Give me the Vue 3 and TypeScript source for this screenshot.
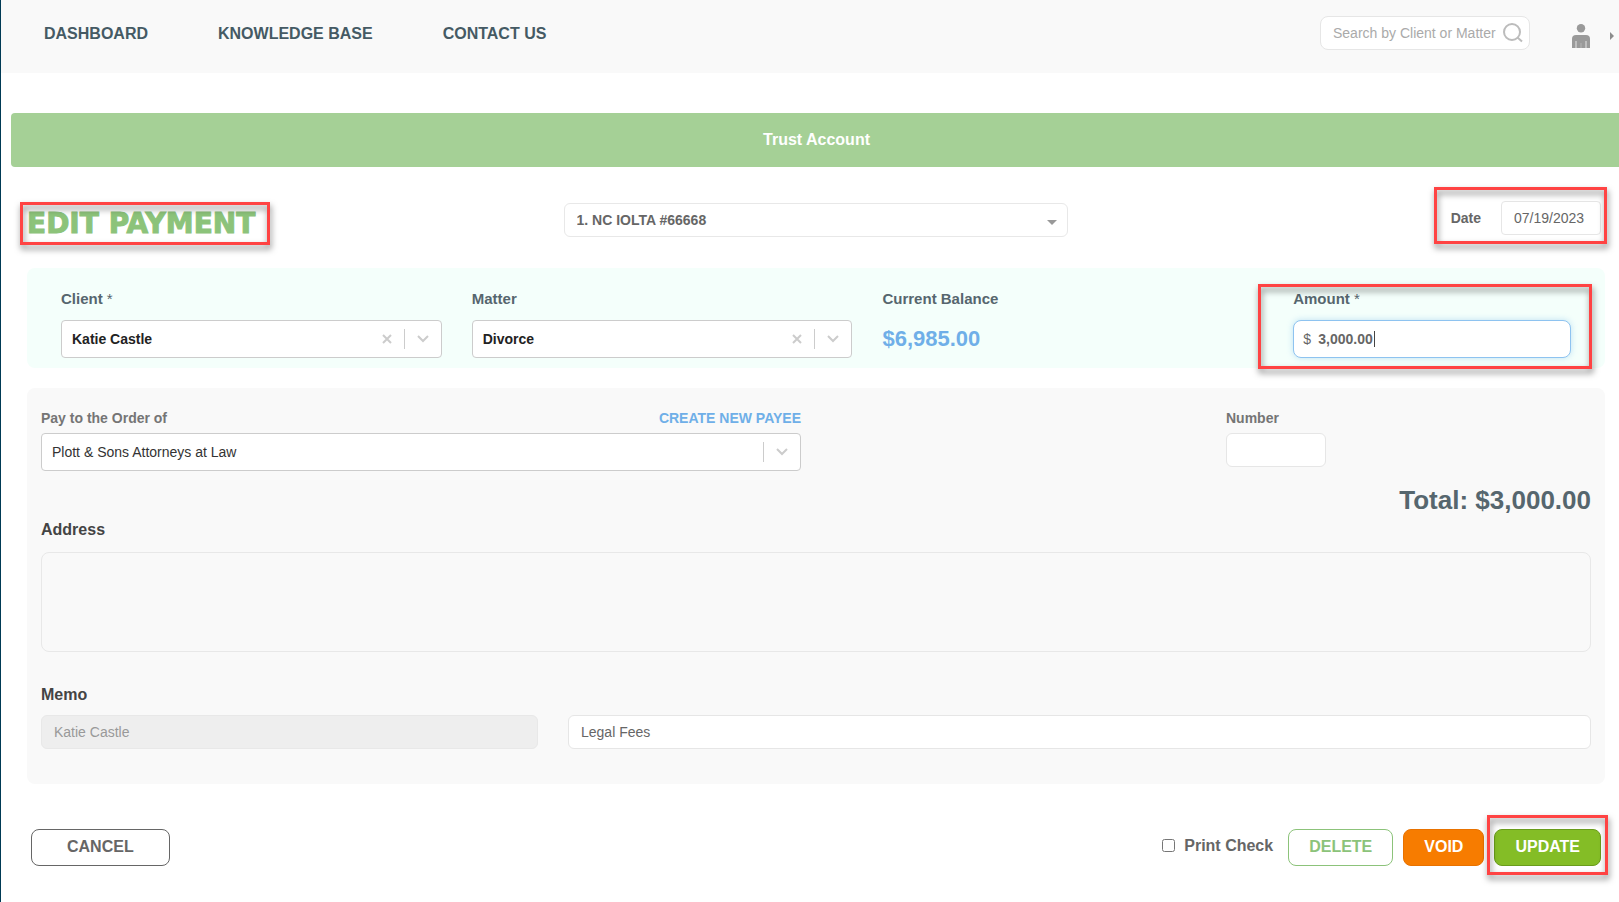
<script setup lang="ts">
import { computed, ref } from 'vue'

interface NavLink {
  label: string
  href: string
}

const navLinks: NavLink[] = [
  { label: 'DASHBOARD', href: '#dashboard' },
  { label: 'KNOWLEDGE BASE', href: '#knowledge-base' },
  { label: 'CONTACT US', href: '#contact' },
]

const search = ref('')
const account = ref('1. NC IOLTA #66668')
const date = ref('07/19/2023')
const client = ref('Katie Castle')
const matter = ref('Divorce')
const amount = ref('3,000.00')
const payee = ref('Plott & Sons Attorneys at Law')
const checkNumber = ref('')
const address = ref('')
const memoClient = ref('Katie Castle')
const memo = ref('Legal Fees')
const printCheck = ref(false)

const total = computed(() => `$${amount.value}`)
</script>

<template>
  <div class="page">
    <header class="topbar">
      <nav class="nav">
        <a v-for="link in navLinks" :key="link.label" :href="link.href">{{ link.label }}</a>
      </nav>
      <div class="tools">
        <div class="search">
          <input v-model="search" type="text" placeholder="Search by Client or Matter" aria-label="Search by Client or Matter" />
          <svg class="search-icon" viewBox="0 0 20 20" width="20" height="20" aria-hidden="true">
            <circle cx="9" cy="9" r="8" />
            <path d="M14.5 14.5 L19 18.5" />
          </svg>
        </div>
        <button class="user" type="button" aria-label="User menu">
          <svg viewBox="0 0 18 24" width="18" height="24" aria-hidden="true">
            <circle cx="9" cy="4.2" r="4.2" fill="#9a9a9a" />
            <path d="M0 24V15Q0 11 4 11H14Q18 11 18 15V24Z" fill="#9a9a9a" />
            <path d="M4 17V24M14 17V24" stroke="#e4e4e4" stroke-width="1" />
            <path d="M9 19V24" stroke="#b4b4b4" stroke-width="1" />
          </svg>
          <svg viewBox="0 0 4 8" width="4" height="8" aria-hidden="true">
            <path d="M0 0L4 4L0 8Z" fill="#8c8c8c" />
          </svg>
        </button>
      </div>
    </header>

    <div class="banner">Trust Account</div>

    <main class="content">
      <div class="title-row">
        <h1 class="title marked">EDIT PAYMENT</h1>
        <div class="account">
          <select v-model="account" aria-label="Account">
            <option>1. NC IOLTA #66668</option>
          </select>
          <svg class="account-caret" viewBox="0 0 10 5" width="10" height="5" aria-hidden="true">
            <path d="M0 0H10L5 5Z" fill="#999" />
          </svg>
        </div>
        <div class="date marked">
          <label for="date">Date</label>
          <input id="date" v-model="date" class="box" type="text" />
        </div>
      </div>

      <section class="summary">
        <div class="field">
          <label for="client">Client <span class="required">*</span></label>
          <div class="combo">
            <select id="client" v-model="client" class="strong">
              <option>Katie Castle</option>
            </select>
            <div class="indicators">
              <button class="clear" type="button" aria-label="Clear client" @click="client = ''">
                <svg viewBox="0 0 10 10" width="10" height="10"><path d="M1 1L9 9M9 1L1 9" /></svg>
              </button>
              <span class="divider"></span>
              <svg class="chevron" viewBox="0 0 12 8" width="12" height="8"><path d="M1 1L6 6L11 1" /></svg>
            </div>
          </div>
        </div>
        <div class="field">
          <label for="matter">Matter</label>
          <div class="combo">
            <select id="matter" v-model="matter" class="strong">
              <option>Divorce</option>
            </select>
            <div class="indicators">
              <button class="clear" type="button" aria-label="Clear matter" @click="matter = ''">
                <svg viewBox="0 0 10 10" width="10" height="10"><path d="M1 1L9 9M9 1L1 9" /></svg>
              </button>
              <span class="divider"></span>
              <svg class="chevron" viewBox="0 0 12 8" width="12" height="8"><path d="M1 1L6 6L11 1" /></svg>
            </div>
          </div>
        </div>
        <div class="field">
          <span class="caption">Current Balance</span>
          <strong class="balance">$6,985.00</strong>
        </div>
        <div class="field marked amount-field">
          <label for="amount">Amount <span class="required">*</span></label>
          <div class="amount">
            <span class="currency">$</span>
            <input id="amount" v-model="amount" type="text" />
            <span class="text-cursor"></span>
          </div>
        </div>
      </section>

      <section class="details">
        <div class="payee-row">
          <div class="payee">
            <div class="label-line">
              <label for="payee">Pay to the Order of</label>
              <a href="#new-payee">CREATE NEW PAYEE</a>
            </div>
            <div class="combo">
              <select id="payee" v-model="payee">
                <option>Plott &amp; Sons Attorneys at Law</option>
              </select>
              <div class="indicators">
                <span class="divider"></span>
                <svg class="chevron" viewBox="0 0 12 8" width="12" height="8"><path d="M1 1L6 6L11 1" /></svg>
              </div>
            </div>
          </div>
          <div class="number">
            <div class="label-line"><label for="number">Number</label></div>
            <input id="number" v-model="checkNumber" class="box" type="text" />
          </div>
        </div>
        <div class="total">Total: {{ total }}</div>
        <label class="heading" for="address">Address</label>
        <textarea id="address" v-model="address"></textarea>
        <label class="heading memo-heading" for="memo">Memo</label>
        <div class="memo-row">
          <input v-model="memoClient" class="box" type="text" disabled aria-label="Memo client" />
          <input id="memo" v-model="memo" class="box" type="text" />
        </div>
      </section>

      <footer class="actions">
        <button class="btn cancel" type="button">CANCEL</button>
        <div class="right-actions">
          <label class="print"><input v-model="printCheck" type="checkbox" />Print Check</label>
          <button class="btn delete" type="button">DELETE</button>
          <button class="btn void" type="button">VOID</button>
          <div class="marked update-wrap">
            <button class="btn update" type="button">UPDATE</button>
          </div>
        </div>
      </footer>
    </main>
  </div>
</template>

<style>
body {
  background: #fff;
}
</style>

<style scoped>
.page,
.page * {
  box-sizing: border-box;
}

.page {
  min-height: 100vh;
  border-left: 1px solid #003a55;
  overflow-x: hidden;
  font-family: 'Liberation Sans', Arial, sans-serif;
  font-size: 14px;
  color: #666;
}

button,
input,
select,
textarea {
  margin: 0;
  font: inherit;
  color: inherit;
  outline: none;
}

a {
  text-decoration: none;
}

/* Top bar */
.topbar {
  display: flex;
  justify-content: space-between;
  align-items: flex-start;
  padding: 16px 5px 17px 43px;
  background: #f9f9f9;
}

.nav {
  display: flex;
  gap: 70px;
  font-size: 16px;
  font-weight: 700;
  line-height: 36px;
}

.nav a {
  color: #455a64;
}

.tools {
  display: flex;
  gap: 42px;
}

.search {
  position: relative;
}

.search input {
  display: block;
  width: 210px;
  height: 34px;
  padding: 0 30px 0 12px;
  border: 1px solid #e6e6e6;
  border-radius: 8px;
  background: #fff;
}

.search input::placeholder {
  color: #aaa;
  opacity: 1;
}

.search-icon {
  position: absolute;
  top: 7px;
  right: 7px;
  fill: none;
  stroke: #bcbcbc;
  stroke-width: 2;
}

.user {
  display: flex;
  align-items: center;
  gap: 20px;
  height: 40px;
  padding: 0;
  border: 0;
  background: none;
}

.banner {
  margin: 40px -3px 0 10px;
  border-radius: 4px;
  background: #a5d096;
  color: #fff;
  font-size: 16px;
  font-weight: 700;
  line-height: 54px;
  text-align: center;
}

.content {
  padding: 34px 14px 36px 26px;
}

/* Red call-out frames around highlighted controls */
.marked {
  position: relative;
}

.marked::after {
  content: '';
  position: absolute;
  border: 3px solid #ff4343;
  filter: drop-shadow(1px 4px 3px rgba(0, 0, 0, 0.5));
  pointer-events: none;
}

/* Title row */
.title-row {
  display: grid;
  grid-template-columns: 34fr 32fr 34fr;
  grid-template-rows: 36px;
}

.title {
  align-self: start;
  justify-self: start;
  margin: 0;
  font-family: 'Arial Black', 'DejaVu Sans', sans-serif;
  font-size: 28px;
  font-weight: 900;
  line-height: 46px;
  color: #8cc37a;
  white-space: nowrap;
  -webkit-text-stroke: 1px #8cc37a;
}

.title::after {
  inset: 1px -15px 2px -7px;
}

.account {
  position: relative;
  align-self: end;
}

.account select {
  display: block;
  width: 100%;
  height: 34px;
  padding: 0 30px 0 12px;
  border: 1px solid #e8e8e8;
  border-radius: 6px;
  background: #fff;
  font-weight: 700;
  appearance: none;
}

.account-caret {
  position: absolute;
  top: 17px;
  right: 11px;
  pointer-events: none;
}

.box {
  display: block;
  width: 100%;
  height: 34px;
  padding: 0 12px;
  border: 1px solid #e6e6e6;
  border-radius: 6px;
  background: #fff;
}

.date {
  display: flex;
  align-self: start;
  justify-self: end;
  align-items: center;
  gap: 20px;
  margin-right: 4px;
}

.date label {
  font-weight: 700;
}

.date .box {
  width: 100px;
  border-radius: 4px;
}

.date::after {
  inset: -14px -6px -9px -17px;
}

/* Client, matter, balance, amount */
.summary {
  display: grid;
  grid-template-columns: 381fr 381fr 381fr 278fr;
  gap: 30px;
  margin-top: 31px;
  padding: 20px 34px 10px;
  border-radius: 8px;
  background: #f4fffb;
}

.field {
  display: flex;
  flex-direction: column;
  gap: 10px;
}

.field label,
.caption {
  font-size: 15px;
  font-weight: 700;
  line-height: 22px;
  color: #56666e;
}

.required {
  font-weight: 400;
}

.balance {
  font-size: 22px;
  line-height: 38px;
  color: #6fafe8;
}

.combo {
  position: relative;
}

.combo select {
  display: block;
  width: 100%;
  height: 38px;
  padding: 0 80px 0 10px;
  border: 1px solid #ccc;
  border-radius: 4px;
  background: #fff;
  color: #333;
  appearance: none;
}

.combo select.strong {
  font-weight: 700;
  color: #222;
}

.indicators {
  position: absolute;
  top: 0;
  right: 13px;
  display: flex;
  align-items: center;
  gap: 12px;
  height: 38px;
  pointer-events: none;
}

.clear {
  display: flex;
  padding: 0;
  border: 0;
  background: none;
  pointer-events: auto;
}

.indicators svg {
  fill: none;
  stroke: #ccc;
  stroke-width: 2;
}

.divider {
  width: 1px;
  height: 20px;
  background: #ccc;
}

.amount-field::after {
  inset: -4px -21px -11px -35px;
}

.amount {
  position: relative;
  display: flex;
  align-items: center;
  height: 38px;
  padding: 0 9px;
  border: 1px solid #8ec3f0;
  border-radius: 8px;
  background: #fff;
  box-shadow: 0 0 6px rgba(110, 180, 235, 0.4);
}

.currency {
  width: 16px;
  color: #666;
}

.amount input {
  width: 100%;
  padding: 0;
  border: 0;
  background: none;
  font-weight: 700;
}

.text-cursor {
  position: absolute;
  top: 10px;
  left: 80px;
  width: 1px;
  height: 16px;
  background: #444;
}

/* Check details */
.details {
  margin-top: 20px;
  padding: 20px 14px 35px;
  border-radius: 8px;
  background: #f9f9f9;
}

.payee-row {
  display: grid;
  grid-template-columns: 760fr 425fr 365fr;
}

.number {
  grid-column: 3;
}

.number .box {
  width: 100px;
}

.label-line {
  display: flex;
  justify-content: space-between;
  margin-bottom: 5px;
  font-weight: 700;
  line-height: 20px;
  color: #757575;
}

.label-line a {
  color: #6fafe8;
}

.total {
  margin-top: 14px;
  font-size: 26px;
  font-weight: 700;
  line-height: 30px;
  text-align: right;
  color: #56666e;
}

.heading {
  display: block;
  margin: 5px 0 12px;
  font-size: 16px;
  font-weight: 700;
  line-height: 20px;
  color: #444;
}

.memo-heading {
  margin: 33px 0 10px;
}

textarea {
  display: block;
  width: 100%;
  height: 100px;
  padding: 8px 12px;
  border: 1px solid #e8e8e8;
  border-radius: 8px;
  background: transparent;
  resize: none;
}

.memo-row {
  display: grid;
  grid-template-columns: 497fr 1023fr;
  gap: 30px;
}

.box:disabled {
  border-color: #e8e8e8;
  background: #eee;
  color: #999;
}

/* Actions */
.actions,
.right-actions {
  display: flex;
  align-items: center;
}

.actions {
  justify-content: space-between;
  margin-top: 45px;
  padding: 0 4px;
}

.right-actions {
  gap: 10px;
}

.btn {
  display: block;
  height: 37px;
  padding: 0 20px 2px;
  border: 1px solid transparent;
  border-radius: 8px;
  background: #fff;
  font-size: 16px;
  font-weight: 700;
  white-space: nowrap;
}

.cancel {
  padding: 0 35px 2px;
  border-color: #666;
}

.print {
  display: flex;
  align-items: center;
  gap: 9px;
  margin-right: 5px;
  padding-bottom: 4px;
  font-size: 16px;
  font-weight: 700;
}

.print input {
  width: 13px;
  height: 13px;
}

.delete {
  border-color: #8cc37a;
  color: #8cc37a;
}

.void {
  border-color: #e87200;
  background: #f77c00;
  color: #fff;
}

.update {
  border-color: #6a9c1c;
  background: #84bd26;
  color: #fff;
}

.update-wrap::after {
  inset: -14px -7px -9px;
}
</style>
